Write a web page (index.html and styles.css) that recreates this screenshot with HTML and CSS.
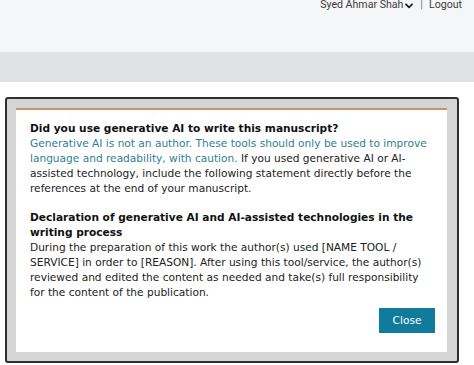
FILE: index.html
```html
<!DOCTYPE html>
<html lang="en">
<head>
  <meta charset="UTF-8">
  <title>Generative AI declaration</title>
  <link rel="stylesheet" href="styles.css">
</head>
<body>
  <div class="top-bar">
    <div class="user-menu">
      <span class="user-name">Syed Ahmar Shah</span>
      <svg class="chevron" viewBox="0 0 8 6" fill="none">
        <path d="M1 1.3L4 4.3L7 1.3" stroke="#222" stroke-width="1.8" stroke-linecap="round" stroke-linejoin="round"/>
      </svg>
      <span class="divider">|</span>
      <a class="logout" href="#">Logout</a>
    </div>
  </div>
  <div class="nav-bar"></div>

  <div class="dialog">
    <div class="dialog-body">
      <p class="question">Did you use generative AI to write this manuscript?</p>
      <p class="intro"><span class="notice">Generative AI is not an author. These tools should only be used to improve language and readability, with caution.</span> If you used generative AI or AI-assisted technology, include the following statement directly before the references at the end of your manuscript.</p>

      <p class="question">Declaration of generative AI and AI-assisted technologies in the writing process</p>
      <p>During the preparation of this work the author(s) used [NAME TOOL / SERVICE] in order to [REASON]. After using this tool/service, the author(s) reviewed and edited the content as needed and take(s) full responsibility for the content of the publication.</p>

      <div class="actions">
        <button type="button" class="close-button">Close</button>
      </div>
    </div>
  </div>
</body>
</html>
```

FILE: styles.css
```css
* {
  margin: 0;
  padding: 0;
  box-sizing: border-box;
}

html, body {
  height: 100%;
  overflow: hidden;
  background: white;
}

body {
  font-family: 'DejaVu Sans', Verdana, sans-serif;
}

.top-bar {
  height: 52px;
  background: #f5f6f7;
  display: flex;
  justify-content: flex-end;
}

.user-menu {
  display: flex;
  align-items: center;
  height: 12px;
  margin-top: -1px;
  padding-right: 12px;
  font-family: Roboto, 'Liberation Sans', sans-serif;
  font-size: 10.6px;
  line-height: 12px;
  color: #3a3a3a;
}

.chevron {
  width: 8px;
  height: 6px;
  margin: 1px 0 0 2px;
}

.divider {
  margin: 0 6px 0 7px;
  color: #777;
}

.logout {
  color: #3a3a3a;
  text-decoration: none;
}

.nav-bar {
  height: 30px;
  background: #dfe1e3;
}

.dialog {
  width: 454px;
  height: 266px;
  margin: 15px 0 0 5px;
  border: 2px solid #2f2f2f;
  border-radius: 3px;
  background: #d5d5d5;
  padding: 9px 10px 9px 9px;
}

.dialog-body {
  height: 100%;
  background: white;
  border-top: 2px solid #c9946c;
  padding: 11px 12px 0 14px;
  font-size: 10.6px;
  line-height: 14.9px;
  color: #222;
}

.question {
  font-weight: bold;
  color: #111;
}

.notice {
  color: #2f7f92;
}

.intro {
  margin-bottom: 14.9px;
}

.actions {
  display: flex;
  justify-content: flex-end;
  margin-top: 8px;
}

.close-button {
  width: 56px;
  height: 25px;
  background: #117b9c;
  color: white;
  border: none;
  font-family: 'DejaVu Sans', Verdana, sans-serif;
  font-size: 10.6px;
}
```
